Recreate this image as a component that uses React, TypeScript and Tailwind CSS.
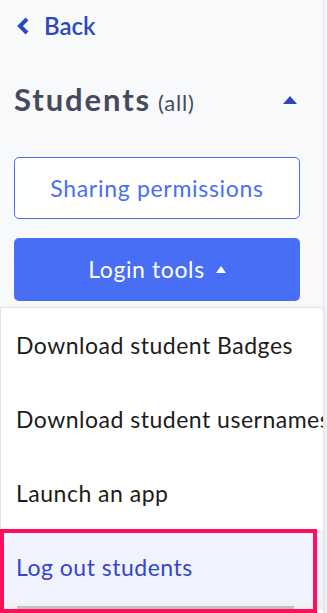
import React from 'react';

const menuItems = [
  'Download student Badges',
  'Download student usernames',
  'Launch an app',
];

export default function App() {
  return (
    <div
      className="relative w-[327px] h-[613px] overflow-hidden bg-[#f3f4f7]"
      style={{ fontFamily: 'Lato, "Open Sans", sans-serif' }}
    >
      <aside className="relative w-[324px] h-full bg-[#f8f9fb] border-r border-[#e4e6eb]">
        <a href="#" className="flex items-center gap-[14px] pl-[16px] pt-[10px] h-[42px] text-[#2b49bd]">
          <svg width="14" height="18" viewBox="0 0 14 18">
            <path d="M11 2 L4 9 L11 16" fill="none" stroke="#2b49bd" strokeWidth="4" strokeLinejoin="miter" />
          </svg>
          <span className="text-[24px] font-semibold leading-none">Back</span>
        </a>

        <div className="flex items-center justify-between pl-[14px] pr-[26px] mt-[42px]">
          <h2 className="flex items-baseline gap-[7px] text-[#454a5d]">
            <span className="text-[31px] font-bold leading-none tracking-[1.9px]">Students</span>
            <span className="text-[22px] leading-none tracking-[0.8px]">(all)</span>
          </h2>
          <svg width="14" height="8" viewBox="0 0 14 8">
            <path d="M0 8 L7 0 L14 8 Z" fill="#2b49bd" />
          </svg>
        </div>

        <div className="flex flex-col gap-[19px] pl-[14px] pr-[23px] mt-[42px]">
          <button className="h-[62px] w-full rounded-[5px] border border-[#4a6ef5] bg-white text-[23px] tracking-[0.7px] text-[#4a6ef5]">
            Sharing permissions
          </button>
          <button className="h-[63px] w-full rounded-[5px] bg-[#476ef4] text-[23px] tracking-[0.6px] text-white flex items-center justify-center gap-[11px]">
            <span>Login tools</span>
            <svg width="10" height="7" viewBox="0 0 10 7">
              <path d="M0 7 L5 0 L10 7 Z" fill="#ffffff" />
            </svg>
          </button>
        </div>

        <div className="absolute left-0 top-[307px] w-[324px] h-[320px] bg-white border border-[#e2e4e9] rounded-tr-[4px] shadow-[0_2px_6px_rgba(0,0,0,0.08)]">
          <div className="w-full overflow-hidden">
            <ul>
              {menuItems.map((item) => (
                <li key={item} className="h-[74px] flex items-center pl-[15px] text-[23px] tracking-[0.5px] text-[#1c1c1c] whitespace-nowrap">
                  {item}
                </li>
              ))}
              <li className="h-[74px] flex items-center pl-[15px] text-[23px] tracking-[0.5px] text-[#3347c8] bg-[#f0f3fe] whitespace-nowrap">
                Log out students
              </li>
            </ul>
            <div className="h-[6px] bg-[#f0f0f0] flex items-center">
              <div className="ml-[16px] w-[277px] h-[3px] bg-[#c1c1c1]" />
            </div>
          </div>
        </div>
      </aside>

      <div className="absolute left-0 top-[529px] w-[317px] h-[84px] border-[4px] border-[#ff0f5a]" />
    </div>
  );
}
